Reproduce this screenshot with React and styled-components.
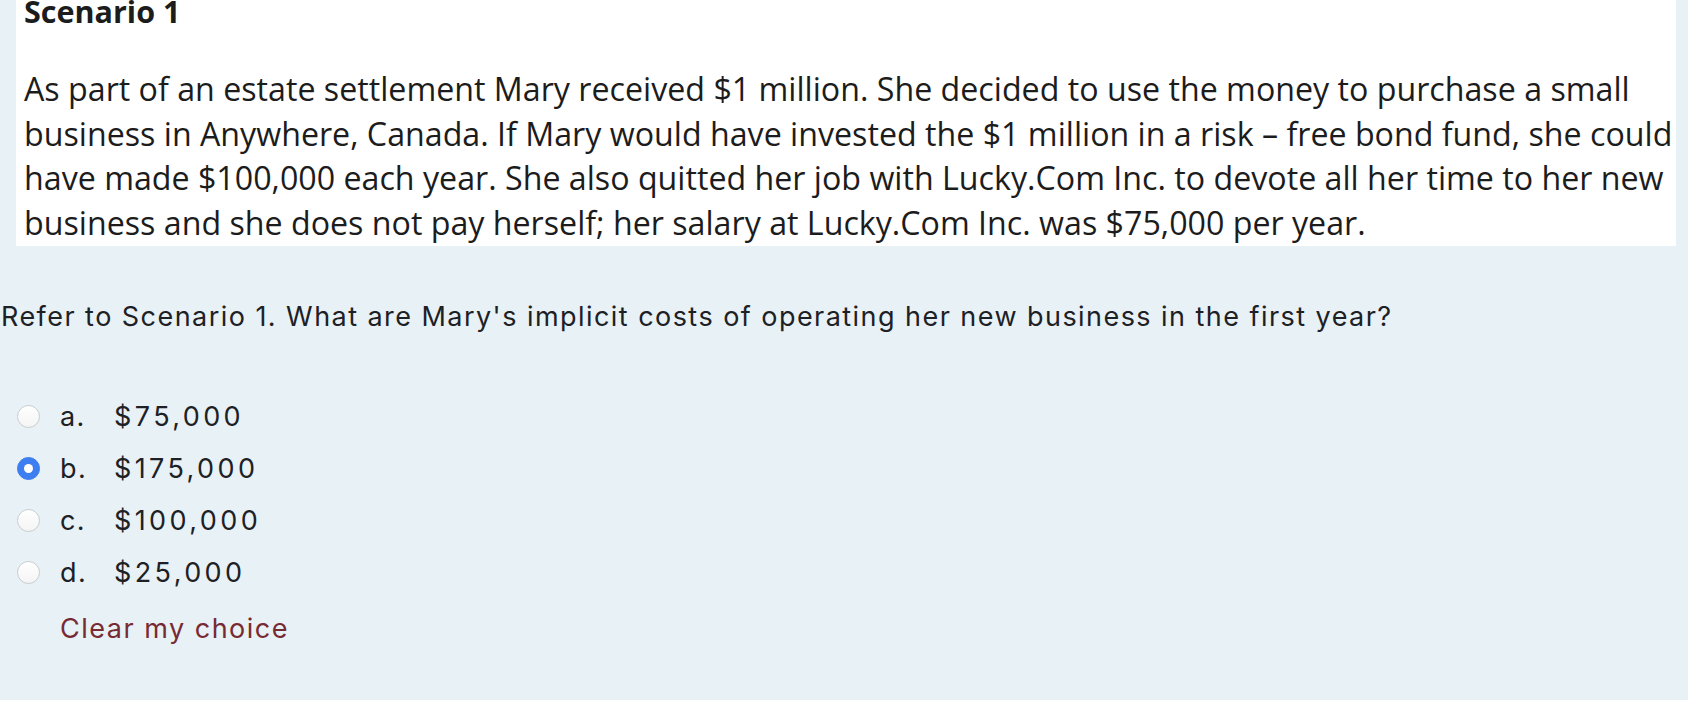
import React from "react";
import styled, { createGlobalStyle } from "styled-components";

const Global = createGlobalStyle`
  html, body { margin: 0; padding: 0; background: #ffffff; }
  #root { width: 1688px; }
`;

const Page = styled.div`
  background: #e8f1f5;
  height: 700px;
  box-sizing: border-box;
  overflow: hidden;
  color: #1d2125;
`;

const ScenarioCard = styled.div`
  margin-left: 16px;
  width: 1660px;
  height: 246px;
  box-sizing: border-box;
  padding: 0 8px;
  background: #ffffff;
  font-family: "Open Sans", "Liberation Sans", sans-serif;
  color: #1c1c1c;
`;

const Heading = styled.div`
  font-weight: 700;
  font-size: 30.5px;
  line-height: 23px;
  margin-bottom: 44px;
`;

const TextLine = styled.div`
  font-size: 32.2px;
  line-height: 44.5px;
  white-space: nowrap;
`;

const Question = styled.div`
  margin-top: 56px;
  padding-left: 1px;
  font-family: Inter, "Liberation Sans", sans-serif;
  font-size: 27px;
  letter-spacing: 1.45px;
  line-height: 30px;
`;

const Options = styled.div`
  margin-top: 58.5px;
  display: flex;
  flex-direction: column;
`;

const OptionRow = styled.div`
  display: flex;
  align-items: center;
  height: 52px;
  padding-left: 17px;
  font-family: Inter, "Liberation Sans", sans-serif;
  font-size: 27px;
  letter-spacing: 1.45px;
  line-height: 30px;
`;

const Radio = styled.span`
  width: 23px;
  height: 23px;
  border-radius: 50%;
  box-sizing: border-box;
  flex: none;
  display: flex;
  align-items: center;
  justify-content: center;
  background: ${(p) => (p.$checked ? "#3d7ff0" : "linear-gradient(#ffffff, #f4f4f4)")};
  border: 1px solid ${(p) => (p.$checked ? "#3d7ff0" : "#c9cdd0")};
  &::after {
    content: "";
    display: ${(p) => (p.$checked ? "block" : "none")};
    width: 9px;
    height: 9px;
    border-radius: 50%;
    background: #ffffff;
  }
`;

const Letter = styled.span`
  margin-left: 20px;
  width: 54px;
`;

const Value = styled.span`
  letter-spacing: 3.4px;
`;

const ClearLink = styled.a`
  display: block;
  margin-top: 15.5px;
  padding-left: 60px;
  font-family: Inter, "Liberation Sans", sans-serif;
  font-size: 27px;
  letter-spacing: 1.5px;
  line-height: 30px;
  color: #782a33;
  text-decoration: none;
  cursor: pointer;
`;

const lines = [
  "As part of an estate settlement Mary received $1 million. She decided to use the money to purchase a small",
  "business in Anywhere, Canada. If Mary would have invested the $1 million in a risk \u2013 free bond fund, she could",
  "have made $100,000 each year. She also quitted her job with Lucky.Com Inc. to devote all her time to her new",
  "business and she does not pay herself; her salary at Lucky.Com Inc. was $75,000 per year.",
];

const options = [
  { letter: "a.", value: "$75,000", checked: false },
  { letter: "b.", value: "$175,000", checked: true },
  { letter: "c.", value: "$100,000", checked: false },
  { letter: "d.", value: "$25,000", checked: false },
];

export default function App() {
  return (
    <>
      <Global />
      <Page>
        <ScenarioCard>
          <Heading>Scenario 1</Heading>
          {lines.map((l, i) => (
            <TextLine key={i}>{l}</TextLine>
          ))}
        </ScenarioCard>
        <Question>
          Refer to Scenario 1. What are Mary's implicit costs of operating her new business in the first year?
        </Question>
        <Options>
          {options.map((o) => (
            <OptionRow key={o.letter}>
              <Radio $checked={o.checked} />
              <Letter>{o.letter}</Letter>
              <Value>{o.value}</Value>
            </OptionRow>
          ))}
        </Options>
        <ClearLink>Clear my choice</ClearLink>
      </Page>
    </>
  );
}
